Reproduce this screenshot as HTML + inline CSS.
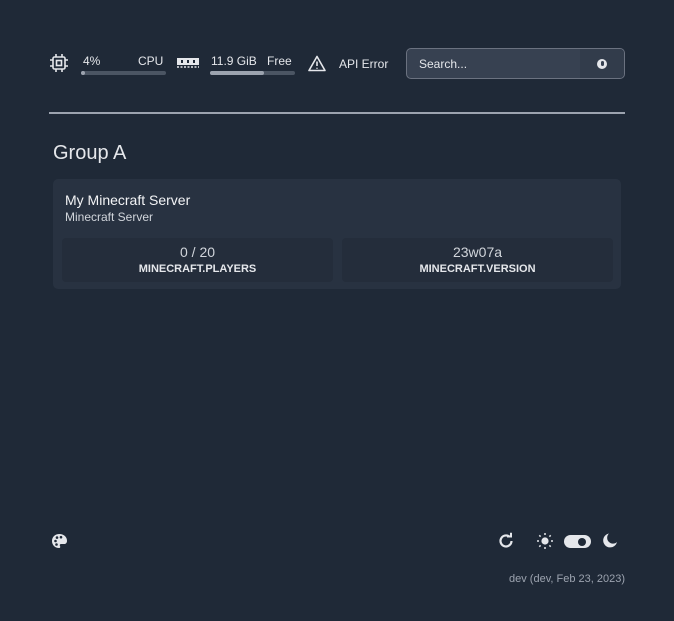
<!DOCTYPE html>
<html><head><style>
body{margin:0;width:674px;height:621px;background:#1f2937;font-family:"Liberation Sans",sans-serif;color:#e5e7eb;position:relative;overflow:hidden}
.a{position:absolute}
.bar{position:absolute;height:4px;border-radius:2px;background:#4b5563}
.bar i{display:block;height:4px;border-radius:2px;background:#9ca3af}
.t{font-size:12px;color:#e5e7eb}
.stat{position:absolute;top:238px;width:271px;height:44px;background:#242d3b;border-radius:4px;text-align:center}
.stat .v{font-size:14px;color:#d1d5db;margin-top:6px}
.stat .l{font-size:11px;font-weight:bold;color:#e5e7eb;margin-top:3px}
</style></head><body>
<svg class="a" style="left:49px;top:53px" width="20" height="20" viewBox="0 0 20 20" fill="none" stroke="#e5e7eb" stroke-width="1.6"><rect x="4" y="4" width="12" height="12" rx="1.5"/><rect x="7.5" y="7.5" width="5" height="5"/><path d="M7 1v3M13 1v3M7 16v3M13 16v3M1 7h3M1 13h3M16 7h3M16 13h3"/></svg>
<div class="a t" style="left:83px;top:54px">4%</div>
<div class="a t" style="left:138px;top:54px">CPU</div>
<div class="bar" style="left:81px;top:71px;width:85px"><i style="width:4px"></i></div>
<svg class="a" style="left:177px;top:57px" width="22" height="12" viewBox="0 0 22 12"><rect x="0" y="1" width="22" height="7" fill="#e5e7eb"/><rect x="4" y="3" width="2" height="3" fill="#1f2937"/><rect x="10" y="3" width="2" height="3" fill="#1f2937"/><rect x="16" y="3" width="2" height="3" fill="#1f2937"/><path d="M0 10h22" stroke="#e5e7eb" stroke-width="1.4" stroke-dasharray="2 1.5"/></svg>
<div class="a t" style="left:211px;top:54px">11.9 GiB</div>
<div class="a t" style="left:267px;top:54px">Free</div>
<div class="bar" style="left:210px;top:71px;width:85px"><i style="width:54px"></i></div>
<svg class="a" style="left:308px;top:55px" width="18" height="17" viewBox="0 0 18 17" fill="none" stroke="#e5e7eb" stroke-width="1.6" stroke-linejoin="round"><path d="M9 1.5L1 15.5h16z"/><path d="M9 6.5v4.5M9 12.8v1"/></svg>
<div class="a t" style="left:339px;top:57px">API Error</div>
<div class="a" style="left:406px;top:48px;width:217px;height:29px;border:1px solid #6b7280;border-radius:5px;background:#374151;overflow:hidden">
<div class="a t" style="left:12px;top:8px;color:#e5e7eb">Search...</div>
<div class="a" style="left:173px;top:0;width:44px;height:29px;background:#323c4b"></div>
<div class="a" style="left:190px;top:10px;width:10px;height:10px;border-radius:50%;background:#e5e7eb"></div>
<div class="a" style="left:194px;top:12px;width:3px;height:5px;border-radius:2px;background:#374151"></div>
</div>
<div class="a" style="left:49px;top:112px;width:576px;height:2px;background:#9ca3af"></div>
<div class="a" style="left:53px;top:142px;font-size:20px;color:#e5e7eb">Group A</div>
<div class="a" style="left:53px;top:179px;width:568px;height:110px;background:#283241;border-radius:5px">
<div class="a" style="left:12px;top:13px;font-size:14px;color:#f3f4f6">My Minecraft Server</div>
<div class="a" style="left:12px;top:31px;font-size:12px;color:#d1d5db">Minecraft Server</div>
</div>
<div class="stat" style="left:62px"><div class="v">0 / 20</div><div class="l">MINECRAFT.PLAYERS</div></div>
<div class="stat" style="left:342px"><div class="v">23w07a</div><div class="l">MINECRAFT.VERSION</div></div>
<svg class="a" style="left:51px;top:533px" width="17" height="16" viewBox="0 0 17 16"><path d="M8.5 1C4 1 1 4 1 8c0 4 3 7 7 7 1.3 0 1.5-1 1-2-.6-1 0-2 1.2-2H13c2 0 3-1.3 3-3.3C16 3.8 12.6 1 8.5 1z" fill="#e5e7eb"/><circle cx="4.5" cy="8" r="1.3" fill="#1f2937"/><circle cx="6" cy="4.6" r="1.3" fill="#1f2937"/><circle cx="10" cy="4.2" r="1.3" fill="#1f2937"/><circle cx="5.5" cy="11.5" r="1.3" fill="#1f2937"/></svg>
<svg class="a" style="left:497px;top:532px" width="18" height="18" viewBox="0 0 18 18" fill="none" stroke="#e5e7eb" stroke-width="2.2"><path d="M14.5 9A5.5 5.5 0 1 1 12.5 4.7"/><path d="M10 4.5h4V0.8" stroke-width="2"/></svg>
<svg class="a" style="left:536px;top:532px" width="18" height="18" viewBox="0 0 18 18"><circle cx="9" cy="9" r="3.6" fill="#e5e7eb"/><g stroke="#e5e7eb" stroke-width="1.5"><path d="M9 1v2M9 15v2M1 9h2M15 9h2M3.3 3.3l1.3 1.3M13.4 13.4l1.3 1.3M3.3 14.7l1.3-1.3M13.4 4.6l1.3-1.3"/></g></svg>
<div class="a" style="left:564px;top:535px;width:27px;height:13px;border-radius:7px;background:#e5e7eb"></div>
<div class="a" style="left:578px;top:538px;width:8px;height:8px;border-radius:50%;background:#1f2937"></div>
<svg class="a" style="left:601px;top:532px" width="17" height="17" viewBox="0 0 17 17"><path d="M8 1.5A7 7 0 1 0 16 10 5.5 5.5 0 0 1 8 1.5z" fill="#e5e7eb"/></svg>
<div class="a" style="right:49px;top:573px;font-size:11px;color:#9ca3af">dev (dev, Feb 23, 2023)</div>
</body></html>
